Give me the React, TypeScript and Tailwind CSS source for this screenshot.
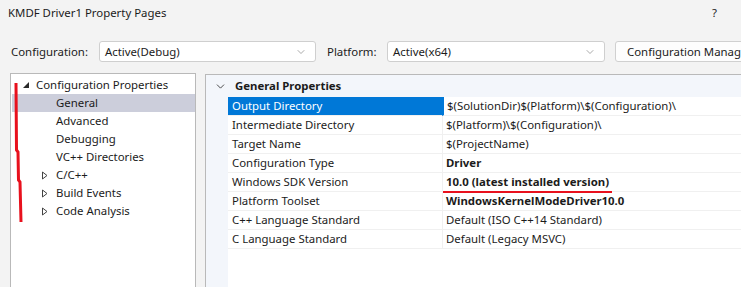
import { ChevronDown } from 'lucide-react'

// Visual Studio "Property Pages" dialog, clipped to the top-left corner.

type Row = { name: string; value: string; bold?: boolean; selected?: boolean }

const rows: Row[] = [
  { name: 'Output Directory', value: '$(SolutionDir)$(Platform)\\$(Configuration)\\', selected: true },
  { name: 'Intermediate Directory', value: '$(Platform)\\$(Configuration)\\' },
  { name: 'Target Name', value: '$(ProjectName)' },
  { name: 'Configuration Type', value: 'Driver', bold: true },
  { name: 'Windows SDK Version', value: '10.0 (latest installed version)', bold: true },
  { name: 'Platform Toolset', value: 'WindowsKernelModeDriver10.0', bold: true },
  { name: 'C++ Language Standard', value: 'Default (ISO C++14 Standard)' },
  { name: 'C Language Standard', value: 'Default (Legacy MSVC)' },
]

const tree: { label: string; level: 0 | 1; mark?: 'open' | 'closed'; selected?: boolean }[] = [
  { label: 'Configuration Properties', level: 0, mark: 'open' },
  { label: 'General', level: 1, selected: true },
  { label: 'Advanced', level: 1 },
  { label: 'Debugging', level: 1 },
  { label: 'VC++ Directories', level: 1 },
  { label: 'C/C++', level: 1, mark: 'closed' },
  { label: 'Build Events', level: 1, mark: 'closed' },
  { label: 'Code Analysis', level: 1, mark: 'closed' },
]

function Combo({ value, width }: { value: string; width: string }) {
  return (
    <div
      className={`${width} shrink-0 h-[21px] flex items-center justify-between pl-[5px] pr-[8px] bg-white border border-[#cfcfcf] rounded-[3px]`}
    >
      <span>{value}</span>
      <ChevronDown size={12} strokeWidth={1.2} className="text-[#707070]" />
    </div>
  )
}

function TreeMark({ mark }: { mark?: 'open' | 'closed' }) {
  if (mark === 'open')
    return (
      <svg width="8" height="8" viewBox="0 0 8 8" className="shrink-0">
        <path d="M7 1 L7 7 L1 7 Z" fill="#2a2a2a" />
      </svg>
    )
  if (mark === 'closed')
    return (
      <svg width="8" height="9" viewBox="0 0 8 9" className="shrink-0">
        <path d="M1.5 1 L6 4.5 L1.5 8 Z" fill="none" stroke="#444" strokeWidth="1" />
      </svg>
    )
  return <span className="w-[8px] shrink-0" />
}

export default function App() {
  return (
    <div className="relative w-[741px] h-[287px] overflow-hidden bg-[#f3f3f3] text-[11.4px] leading-none text-[#1b1b1b] font-['Segoe_UI','Noto_Sans',sans-serif]">
      {/* title */}
      <div className="h-[26px] flex items-center justify-between pl-[8px] pr-[24px]">
        <span>KMDF Driver1 Property Pages</span>
        <span>?</span>
      </div>

      {/* configuration / platform bar */}
      <div className="mt-[15px] h-[21px] flex items-center whitespace-nowrap">
        <span className="ml-[11px] w-[88px] shrink-0">Configuration:</span>
        <Combo value="Active(Debug)" width="w-[217px]" />
        <span className="ml-[11px] w-[60px] shrink-0">Platform:</span>
        <Combo value="Active(x64)" width="w-[218px]" />
        <div className="ml-[10px] h-[21px] w-[140px] shrink-0 flex items-center pl-[11px] bg-[#fdfdfd] border border-[#d0d0d0] rounded-[3px]">
          Configuration Manager...
        </div>
      </div>

      {/* panels */}
      <div className="mt-[11px] flex items-start">
        {/* tree */}
        <div className="ml-[10px] w-[186px] h-[230px] shrink-0 bg-white border border-[#b9b9b9] pt-[2px] pl-[1px]">
          {tree.map((t) => (
            <div
              key={t.label}
              className={`h-[18px] flex items-center whitespace-nowrap ${t.selected ? 'bg-[#cccedb]' : ''} ${
                t.level === 0 ? 'pl-[10px]' : 'pl-[29px]'
              }`}
            >
              <TreeMark mark={t.mark} />
              <span className={t.level === 0 ? 'ml-[6px]' : 'ml-[7px]'}>{t.label}</span>
            </div>
          ))}
        </div>

        {/* property grid */}
        <div className="ml-[9px] mt-[1px] flex-1 h-[230px] bg-white border-l border-t border-[#b9b9b9] flex">
          <div className="w-[22px] shrink-0 bg-[#f3f6fb]" />
          <div className="flex-1 min-w-0">
            <div className="h-[22px] -ml-[22px] pl-[8px] flex items-center bg-[#f3f6fb] font-bold">
              <ChevronDown size={13} strokeWidth={1.6} className="text-[#333]" />
              <span className="ml-[8px]">General Properties</span>
            </div>
            {rows.map((r) => (
              <div key={r.name} className="h-[19px] flex whitespace-nowrap">
                <div
                  className={`w-[214px] shrink-0 pl-[4px] flex items-center border-b border-[#f0f0f0] ${
                    r.selected ? 'bg-[#0078d7] text-white border-[#0078d7]' : ''
                  }`}
                >
                  {r.name}
                </div>
                <div
                  className={`flex-1 pl-[3px] flex items-center border-b border-l border-b-[#f0f0f0] ${
                    r.selected ? 'border-l-[#0078d7] border-l-2 pl-[2px]' : 'border-l-[#f0f0f0]'
                  } ${r.bold ? 'font-bold' : ''}`}
                >
                  {r.value}
                </div>
              </div>
            ))}
          </div>
        </div>
      </div>

      {/* red annotation marks drawn over the screenshot */}
      <svg className="absolute inset-0 pointer-events-none" width="741" height="287" viewBox="0 0 741 287">
        <path d="M16 83 L16.5 150 L18 152 L18.5 180 L20 182 L21 222" fill="none" stroke="#e8111d" strokeWidth="3" />
        <path d="M443 192 L612 192" stroke="#e8111d" strokeWidth="2" />
      </svg>
    </div>
  )
}
